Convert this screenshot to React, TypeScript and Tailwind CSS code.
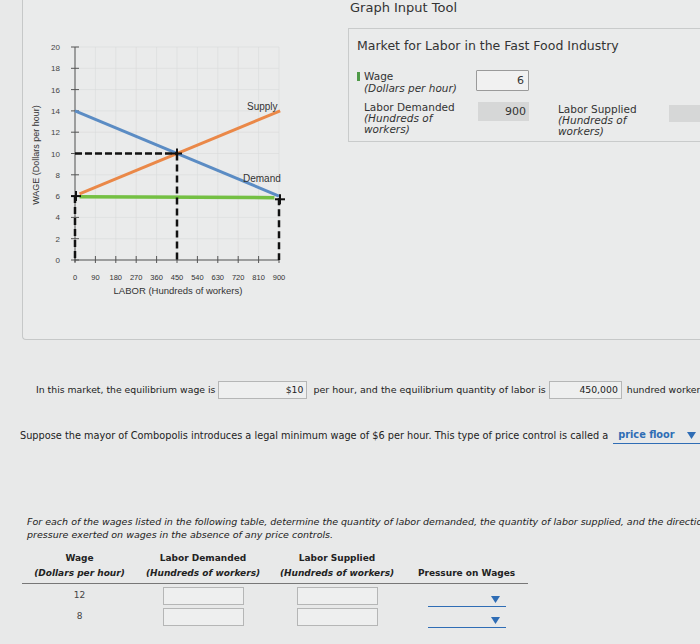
import React from 'react';

// chart scale, page pixel coords (svg viewBox starts at the frame's left edge)
const X0 = 75;
const Y0 = 260;
const sx = (v: number) => X0 + (v * 204) / 900;
const sy = (w: number) => Y0 - w * 10.65;

const xTicks = [0, 90, 180, 270, 360, 450, 540, 630, 720, 810, 900];
const yTicks = [0, 2, 4, 6, 8, 10, 12, 14, 16, 18, 20];

function Plus({ x, y }: { x: number; y: number }) {
  return (
    <g stroke="#111" strokeWidth={2}>
      <line x1={x - 5} y1={y} x2={x + 5} y2={y} />
      <line x1={x} y1={y - 5} x2={x} y2={y + 5} />
    </g>
  );
}

function LaborChart() {
  return (
    <svg width={325} height={336} viewBox="23 0 325 336" className="shrink-0" fontFamily="'Liberation Sans', Arial, sans-serif">
      {/* grid */}
      {xTicks.map(t => (
        <line key={'gx' + t} x1={sx(t)} y1={sy(20)} x2={sx(t)} y2={Y0} stroke="#d9dada" strokeWidth={0.6} />
      ))}
      {yTicks.map(t => (
        <line key={'gy' + t} x1={X0} y1={sy(t)} x2={sx(900)} y2={sy(t)} stroke="#d9dada" strokeWidth={0.6} />
      ))}

      {/* axes */}
      <line x1={X0} y1={sy(20)} x2={X0} y2={Y0 + 2} stroke="#555" strokeWidth={1} />
      <line x1={X0} y1={Y0} x2={sx(900)} y2={Y0} stroke="#555" strokeWidth={1} />
      {yTicks.map(t => (
        <line key={'ty' + t} x1={X0 - 4} y1={sy(t)} x2={X0 + 4} y2={sy(t)} stroke="#555" strokeWidth={1} />
      ))}
      {xTicks.map(t => (
        <line key={'tx' + t} x1={sx(t)} y1={Y0 - 4} x2={sx(t)} y2={Y0 + 3} stroke="#555" strokeWidth={1} />
      ))}

      {/* tick labels */}
      {yTicks.map(t => (
        <text key={'ly' + t} x={60} y={sy(t) + 3} fontSize={8} fill="#444" textAnchor="end">
          {t}
        </text>
      ))}
      {xTicks.map(t => (
        <text key={'lx' + t} x={sx(t)} y={280} fontSize={7.5} fill="#333" textAnchor="middle">
          {t}
        </text>
      ))}

      <text x={178} y={294} fontSize={9.5} fill="#333" textAnchor="middle">
        LABOR (Hundreds of workers)
      </text>
      <text x={39} y={155} fontSize={9} fill="#333" textAnchor="middle" transform="rotate(-90 39 155)">
        WAGE (Dollars per hour)
      </text>

      {/* curves */}
      <line x1={sx(0)} y1={sy(14)} x2={sx(900)} y2={sy(6)} stroke="#5b8cc4" strokeWidth={3} />
      <line x1={sx(20)} y1={sy(6.2)} x2={sx(905)} y2={sy(14)} stroke="#ea8848" strokeWidth={3} />
      <line x1={sx(20)} y1={sy(5.95)} x2={sx(880)} y2={sy(5.85)} stroke="#74c043" strokeWidth={3.5} />

      {/* dashed guides */}
      <line x1={X0} y1={sy(10)} x2={sx(450)} y2={sy(10)} stroke="#111" strokeWidth={2.5} strokeDasharray="7 3" />
      <line x1={sx(450)} y1={sy(10)} x2={sx(450)} y2={Y0} stroke="#111" strokeWidth={2.5} strokeDasharray="7 4" />
      <line x1={X0} y1={sy(6)} x2={X0} y2={Y0} stroke="#111" strokeWidth={2.5} strokeDasharray="7 4" />
      <line x1={sx(900)} y1={sy(5.8)} x2={sx(900)} y2={Y0} stroke="#111" strokeWidth={2.5} strokeDasharray="7 4" />

      <Plus x={X0 + 1} y={sy(6)} />
      <Plus x={sx(450)} y={sy(10)} />
      <Plus x={sx(900) + 1} y={sy(5.7)} />

      <text x={247} y={110} fontSize={10} fill="#333">Supply</text>
      <text x={243} y={182} fontSize={10} fill="#333">Demand</text>
    </svg>
  );
}

function InputTool() {
  return (
    <div className="flex-1 min-w-0 overflow-hidden">
      <div className="h-[16px] pl-[2px] text-[13px] leading-[16px] text-[#333]">Graph Input Tool</div>
      <div className="mt-[12px] h-[114px] border border-r-0 border-[#c9cbcb] pl-[8px] pt-[9px] text-[#333]">
        <div className="h-[16px] text-[12.5px] leading-[16px] whitespace-nowrap">Market for Labor in the Fast Food Industry</div>

        <div className="mt-[16px] flex items-start">
          <div className="flex w-[119px] shrink-0 items-start">
            <div className="mt-[2px] h-[9px] w-[3px] bg-[#4f9a48]" />
            <div className="pl-[4px] text-[10.5px] leading-[12px]">
              <div>Wage</div>
              <div className="italic">(Dollars per hour)</div>
            </div>
          </div>
          <div className="h-[21px] w-[53px] shrink-0 rounded-[1px] border border-[#9a9a9a] bg-[#f1f1f1] pr-[4px] text-right text-[11px] leading-[19px]">
            6
          </div>
        </div>

        <div className="mt-[8px] flex items-start whitespace-nowrap">
          <div className="w-[121px] shrink-0 pl-[7px] text-[10.5px] leading-[11px]">
            <div>Labor Demanded</div>
            <div className="italic">(Hundreds of</div>
            <div className="italic">workers)</div>
          </div>
          <div className="h-[19px] w-[51px] shrink-0 bg-[#d6d7d7] pr-[3px] text-right text-[11px] leading-[19px]">900</div>
          <div className="ml-[29px] mt-[2px] w-[111px] shrink-0 text-[10.5px] leading-[11px]">
            <div>Labor Supplied</div>
            <div className="italic">(Hundreds of</div>
            <div className="italic">workers)</div>
          </div>
          <div className="mt-[3px] h-[17px] w-[60px] shrink-0 bg-[#d6d7d7]" />
        </div>
      </div>
    </div>
  );
}

function Box({ w, value, className = '' }: { w: string; value?: string; className?: string }) {
  return (
    <div className={`h-[18px] shrink-0 ${w} border border-[#b5b6b6] bg-[#eeefef] pr-[3px] text-right leading-[16px] ${className}`}>
      {value}
    </div>
  );
}

function Dropdown({ className = '' }: { className?: string }) {
  return (
    <div className={`flex h-[14px] w-[78px] items-center justify-end border-b border-[#2f6db5] pr-[6px] ${className}`}>
      <svg width={9} height={7} viewBox="0 0 9 7">
        <path d="M0 0 H9 L4.5 7 Z" fill="#2f6db5" />
      </svg>
    </div>
  );
}

export default function App() {
  return (
    <div className="h-[644px] w-[700px] overflow-hidden bg-[#e8e9e9] font-['DejaVu_Sans',Verdana,sans-serif] text-[#222]">
      {/* graph frame */}
      <div className="ml-[22px] flex h-[340px] rounded-bl-[4px] border-b border-l border-[#c6c8c8] bg-[#eaebeb]">
        <LaborChart />
        <InputTool />
      </div>

      {/* equilibrium sentence */}
      <div className="mt-[41px] flex h-[18px] items-center overflow-hidden whitespace-nowrap pl-[36px] text-[9.3px]">
        <span>In this market, the equilibrium wage is</span>
        <Box w="w-[89px]" value="$10" className="ml-[3px]" />
        <span className="ml-[6px] text-[9.5px]">per hour, and the equilibrium quantity of labor is</span>
        <Box w="w-[73px]" value="450,000" className="ml-[3px]" />
        <span className="ml-[5px]">hundred workers.</span>
      </div>

      {/* price control sentence */}
      <div className="mt-[28px] flex h-[18px] items-center overflow-hidden whitespace-nowrap pl-[20px] text-[9.75px]">
        <span>
          Suppose the mayor of Combopolis introduces a legal minimum wage of $6 per hour. This type of price control is
          called a
        </span>
        <div className="ml-[5px] flex h-[15px] w-[92px] shrink-0 items-center border-b border-[#2f6db5] pl-[5px] font-bold text-[#2f6db5]">
          <span>price floor</span>
          <svg width={9} height={7} viewBox="0 0 9 7" className="ml-[12px]">
            <path d="M0 0 H9 L4.5 7 Z" fill="#2f6db5" />
          </svg>
        </div>
      </div>

      {/* table intro */}
      <div className="mt-[70px] overflow-hidden whitespace-nowrap pl-[27px] text-[9.5px] italic leading-[13px]">
        <div>
          For each of the wages listed in the following table, determine the quantity of labor demanded, the quantity of
          labor supplied, and the direction of the
        </div>
        <div>pressure exerted on wages in the absence of any price controls.</div>
      </div>

      {/* table */}
      <div className="ml-[22px] mt-[10px] w-[506px] text-[9px]">
        <div className="flex items-end border-b border-[#777] pb-[2px] font-bold leading-[15px] whitespace-nowrap">
          <div className="w-[115px] text-center">
            <div>Wage</div>
            <div className="italic">(Dollars per hour)</div>
          </div>
          <div className="w-[132px] text-center">
            <div>Labor Demanded</div>
            <div className="italic">(Hundreds of workers)</div>
          </div>
          <div className="w-[136px] text-center">
            <div>Labor Supplied</div>
            <div className="italic">(Hundreds of workers)</div>
          </div>
          <div className="w-[123px] text-center">Pressure on Wages</div>
        </div>

        {['12', '8'].map(wage => (
          <div key={wage} className="mt-[2px] flex h-[19px] items-center">
            <div className="w-[115px] text-center text-[#444]">{wage}</div>
            <div className="flex w-[132px] justify-center">
              <Box w="w-[81px]" />
            </div>
            <div className="flex w-[136px] justify-center">
              <Box w="w-[81px]" />
            </div>
            <div className="flex w-[123px] justify-center">
              <Dropdown className="mt-[8px]" />
            </div>
          </div>
        ))}
      </div>
    </div>
  );
}
